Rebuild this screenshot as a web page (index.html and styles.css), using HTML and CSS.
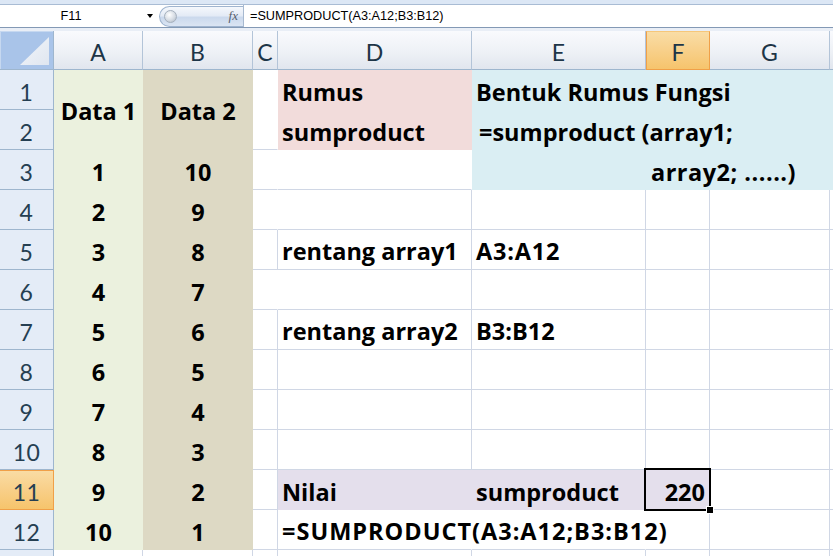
FILE: index.html
```html
<!DOCTYPE html>
<html>
<head>
<meta charset="utf-8">
<title>Sumproduct</title>
<link rel="stylesheet" href="styles.css">
</head>
<body>
<div class="app">
  <div class="strip"></div>
  <div class="fbar">
    <div class="namebox"><span class="nm">F11</span><span class="dd"></span></div>
    <div class="fxbtn"><span class="knob"></span><span class="fx">fx</span></div>
    <div class="formula">=SUMPRODUCT(A3:A12;B3:B12)</div>
  </div>
  <div class="gap"></div>
  <div class="sheet">
    <div class="corner"><svg width="54" height="39" viewBox="0 0 54 39"><defs><linearGradient id="tg" x1="0" y1="0" x2="1" y2="1"><stop offset="0" stop-color="#f3f6fa"/><stop offset="1" stop-color="#dfe6f0"/></linearGradient></defs><polygon points="49,6 49,34 20,34" fill="url(#tg)"/></svg></div>
    <div class="ch">A</div>
    <div class="ch">B</div>
    <div class="ch">C</div>
    <div class="ch">D</div>
    <div class="ch">E</div>
    <div class="ch hsel">F</div>
    <div class="ch">G</div>
    <div class="ch"></div>

    <!-- row 1 -->
    <div class="rh">1</div>
    <div class="c g ctr mid r2">Data 1</div>
    <div class="c t ctr mid r2">Data 2</div>
    <div class="c r2 nr"></div>
    <div class="c p">Rumus</div>
    <div class="c bl s4">Bentuk Rumus Fungsi</div>

    <!-- row 2 -->
    <div class="rh">2</div>
    <div class="c p">sumproduct</div>
    <div class="c bl s4 ind">=sumproduct (array1;</div>

    <!-- row 3 -->
    <div class="rh">3</div>
    <div class="c g ctr">1</div>
    <div class="c t ctr">10</div>
    <div class="c nr"></div>
    <div class="c nr"></div>
    <div class="c bl s4 far sp1">array2; ......)</div>

    <!-- row 4 -->
    <div class="rh">4</div>
    <div class="c g ctr">2</div>
    <div class="c t ctr">9</div>
    <div class="c nr"></div>
    <div class="c"></div>
    <div class="c"></div>
    <div class="c"></div>
    <div class="c"></div>
    <div class="c"></div>

    <!-- row 5 -->
    <div class="rh">5</div>
    <div class="c g ctr">3</div>
    <div class="c t ctr">8</div>
    <div class="c"></div>
    <div class="c">rentang array1</div>
    <div class="c sp2">A3:A12</div>
    <div class="c"></div>
    <div class="c"></div>
    <div class="c"></div>

    <!-- row 6 -->
    <div class="rh">6</div>
    <div class="c g ctr">4</div>
    <div class="c t ctr">7</div>
    <div class="c nr"></div>
    <div class="c"></div>
    <div class="c"></div>
    <div class="c"></div>
    <div class="c"></div>
    <div class="c"></div>

    <!-- row 7 -->
    <div class="rh">7</div>
    <div class="c g ctr">5</div>
    <div class="c t ctr">6</div>
    <div class="c"></div>
    <div class="c">rentang array2</div>
    <div class="c">B3:B12</div>
    <div class="c"></div>
    <div class="c"></div>
    <div class="c"></div>

    <!-- row 8 -->
    <div class="rh">8</div>
    <div class="c g ctr">6</div>
    <div class="c t ctr">5</div>
    <div class="c"></div>
    <div class="c"></div>
    <div class="c"></div>
    <div class="c"></div>
    <div class="c"></div>
    <div class="c"></div>

    <!-- row 9 -->
    <div class="rh">9</div>
    <div class="c g ctr">7</div>
    <div class="c t ctr">4</div>
    <div class="c"></div>
    <div class="c"></div>
    <div class="c"></div>
    <div class="c"></div>
    <div class="c"></div>
    <div class="c"></div>

    <!-- row 10 -->
    <div class="rh">10</div>
    <div class="c g ctr">8</div>
    <div class="c t ctr">3</div>
    <div class="c"></div>
    <div class="c"></div>
    <div class="c"></div>
    <div class="c"></div>
    <div class="c"></div>
    <div class="c"></div>

    <!-- row 11 -->
    <div class="rh rsel">11</div>
    <div class="c g ctr">9</div>
    <div class="c t ctr">2</div>
    <div class="c"></div>
    <div class="c lv">Nilai</div>
    <div class="c lv">sumproduct</div>
    <div class="c lv rt active">220</div>
    <div class="c"></div>
    <div class="c"></div>

    <!-- row 12 -->
    <div class="rh">12</div>
    <div class="c g ctr">10</div>
    <div class="c t ctr">1</div>
    <div class="c"></div>
    <div class="c nr sp3">=SUMPRODUCT(A3:A12;B3:B12)</div>
    <div class="c nr"></div>
    <div class="c"></div>
    <div class="c"></div>
    <div class="c"></div>

    <!-- row 13 (partly visible) -->
    <div class="rh"></div>
    <div class="c"></div>
    <div class="c"></div>
    <div class="c"></div>
    <div class="c"></div>
    <div class="c"></div>
    <div class="c"></div>
    <div class="c"></div>
    <div class="c"></div>
  </div>
</div>
</body>
</html>
```

FILE: styles.css
```css
* { box-sizing: border-box; margin: 0; padding: 0; }
html, body { width: 833px; height: 556px; overflow: hidden; background: #fff; }
body { font-family: "Lato", "Liberation Sans", sans-serif; color: #000; }

.app { width: 833px; }

.strip { height: 5px; background: #dce7f5; border-bottom: 1px solid #a9bcd4; }

.fbar {
  height: 23px;
  display: flex;
  align-items: stretch;
  background: #fff;
  border-bottom: 1px solid #8399b5;
}
.namebox { width: 159px; display: flex; align-items: center; }
.nm {
  width: 142px;
  text-align: center;
  font-family: "Liberation Sans", sans-serif;
  font-size: 12.7px;
  color: #000;
}
.dd {
  width: 0; height: 0;
  margin-left: 5px;
  border-left: 3.5px solid transparent;
  border-right: 3.5px solid transparent;
  border-top: 4px solid #000;
}
.fxbtn {
  width: 84px;
  height: 21px;
  align-self: center;
  display: flex;
  align-items: center;
  border: 1px solid #9fb4cf;
  border-right: none;
  border-radius: 11px 0 0 11px;
  background: linear-gradient(#f5f8fc 0%, #e4ebf6 45%, #cbd9ed 55%, #dbe5f3 100%);
}
.knob {
  width: 13px; height: 13px;
  margin-left: 4px;
  border-radius: 50%;
  border: 1px solid #a5b0bd;
  background: radial-gradient(circle at 40% 35%, #ffffff 0%, #d6dce4 55%, #aab4c1 100%);
}
.fx {
  margin-left: auto;
  margin-right: 5px;
  font-family: "Liberation Serif", serif;
  font-style: italic;
  font-size: 13px;
  color: #56606c;
}
.formula {
  flex: 1;
  border-left: 1px solid #a7b9d0;
  padding-left: 6px;
  font-family: "Liberation Sans", sans-serif;
  font-size: 12.7px;
  line-height: 22px;
  white-space: nowrap;
}
.gap { height: 3px; background: #e9eef6; }

.sheet {
  display: grid;
  grid-template-columns: 54px 89px 110px 25px 194px 174px 64px 120px 10px;
  grid-template-rows: 39px repeat(13, 40px);
}

.corner {
  background: #a9c4e9;
  border-right: 1px solid #9eb6ce;
  border-bottom: 1px solid #9eb6ce;
  box-shadow: inset 1px 1px 0 #c6d8f0;
}
.corner svg { display: block; }

.ch {
  display: flex;
  align-items: center;
  justify-content: center;
  padding-top: 3px;
  background: linear-gradient(#f9fafd 0%, #eef1f6 55%, #e1e6ee 100%);
  border-right: 1px solid #b3c4d8;
  border-bottom: 1px solid #9eb6ce;
  font-size: 23px;
  color: #1d3547;
}
.ch.hsel {
  background: linear-gradient(#f9dda6 0%, #f8d08a 50%, #f6c46c 100%);
  border: 1px solid #f0a048;
  border-top-color: #f6c77a;
}

.rh {
  display: flex;
  align-items: center;
  justify-content: center;
  padding-top: 4px;
  background: #e4ecf7;
  border-right: 1px solid #9eb6ce;
  border-bottom: 1px solid #9eb6ce;
  font-size: 23px;
  letter-spacing: 0.5px;
  color: #253f52;
}
.rh.rsel {
  background: linear-gradient(#f9dca4 0%, #f8cf88 50%, #f6c46c 100%);
  border: 1px solid #f0a048;
  border-left: none;
}

.c {
  position: relative;
  display: flex;
  align-items: flex-end;
  padding: 0 0 5px 4px;
  border-right: 1px solid #d0d7e5;
  border-bottom: 1px solid #d0d7e5;
  font-family: "Open Sans", "Lato", sans-serif;
  font-weight: 700;
  font-size: 23.5px;
  line-height: 26px;
  white-space: nowrap;
}
.c.nr { border-right-color: transparent; }
.c.r2 { grid-row: span 2; }
.c.s4 { grid-column: span 4; }

.g { background: #ebf1de; border: none; }
.t { background: #ddd9c4; border: none; }
.p { background: #f2dcdb; border: none; }
.bl { background: #daeef3; border: none; }
.lv { background: #e4dfec; border: none; }

.ctr { justify-content: center; padding-left: 0; }
.mid { align-items: center; padding-bottom: 0; padding-top: 2px; }
.rt { justify-content: flex-end; padding-right: 5px; }
.ind { padding-left: 7px; }
.far { padding-left: 179px; }
.sp1 { letter-spacing: 0.5px; }
.sp2 { letter-spacing: 0.8px; }
.sp3 { letter-spacing: 1px; }

.active::after {
  content: "";
  position: absolute;
  left: -2px; top: -2px; right: -1px; bottom: -1px;
  border: 2px solid #000;
}
.active::before {
  content: "";
  position: absolute;
  right: -4px; bottom: -4px;
  width: 6px; height: 6px;
  background: #000;
  border: 1px solid #fff;
  z-index: 2;
}
```
